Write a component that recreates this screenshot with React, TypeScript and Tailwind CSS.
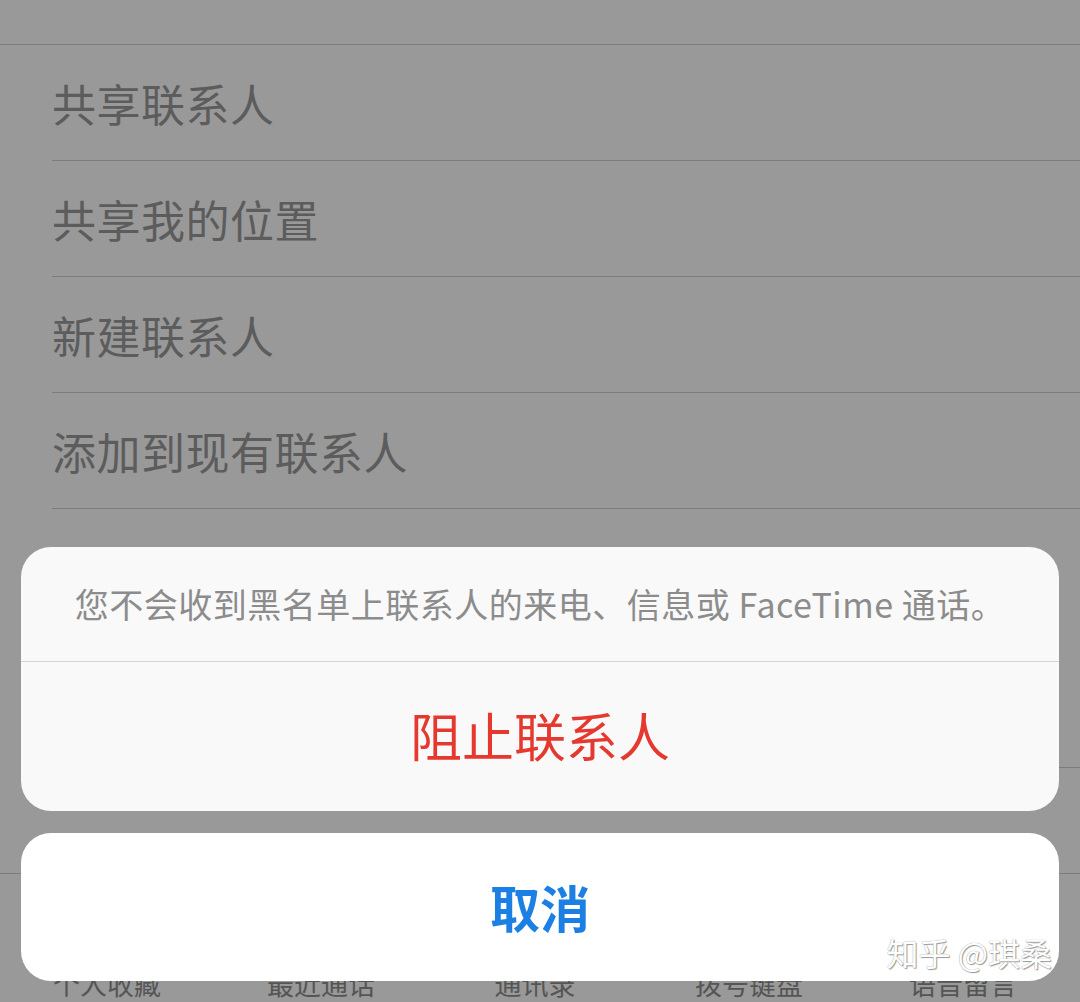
import React from "react";

const rows = ["共享联系人", "共享我的位置", "新建联系人", "添加到现有联系人"];
const tabs = ["个人收藏", "最近通话", "通讯录", "拨号键盘", "语音留言"];

export default function App() {
  return (
    <div
      className="relative h-[1002px] w-[1080px] overflow-hidden bg-[#999999]"
      style={{ fontFamily: '"Noto Sans CJK SC", "Noto Sans", sans-serif' }}
    >
      {/* background list */}
      <div className="flex h-full flex-col">
        <div className="h-[45px] shrink-0 border-b border-[#7c7c7c]" />
        {rows.map((r) => (
          <div key={r} className="ml-[52px] flex h-[116px] shrink-0 items-center border-b border-[#7c7c7c]">
            <span className="text-[44px] leading-none tracking-[0.5px] text-[#5c5c5c]">{r}</span>
          </div>
        ))}
        <div className="ml-[52px] h-[259px] shrink-0 border-b border-[#7c7c7c]" />
        <div className="h-[106px] shrink-0 border-b border-[#7c7c7c]" />
        <div className="grid flex-1 grid-cols-5 items-end pb-[5px] pr-[10px]">
          {tabs.map((t) => (
            <div key={t} className="flex justify-center">
              <span className="text-[27px] leading-[27px] text-[#555555]">{t}</span>
            </div>
          ))}
        </div>
      </div>

      {/* action sheet overlay */}
      <div className="absolute inset-0 flex flex-col justify-end gap-[22px] px-[21px] pb-[21px]">
        <div className="overflow-hidden rounded-[30px] bg-[#f9f9f9]">
          <div className="flex h-[115px] items-center justify-center border-b border-[#d6d6d6]">
            <span className="text-[34px] leading-none tracking-[0.5px] text-[#8c8c8c]">
              您不会收到黑名单上联系人的来电、信息或 FaceTime 通话。
            </span>
          </div>
          <div className="flex h-[149px] items-center justify-center pb-[4px]">
            <span className="text-[52px] leading-none text-[#e5392f]">阻止联系人</span>
          </div>
        </div>
        <div className="flex h-[148px] items-center justify-center rounded-[30px] bg-white pb-[2px]">
          <span className="text-[50px] leading-none font-bold text-[#1b7fe3]">取消</span>
        </div>
      </div>

      {/* watermark */}
      <div
        className="absolute right-[28px] top-[936px] text-[32px] leading-none text-white"
        style={{ textShadow: "0 0 1px #8a8a8a, 1px 1px 1px #9a9a9a" }}
      >
        知乎 @琪桑
      </div>
    </div>
  );
}
